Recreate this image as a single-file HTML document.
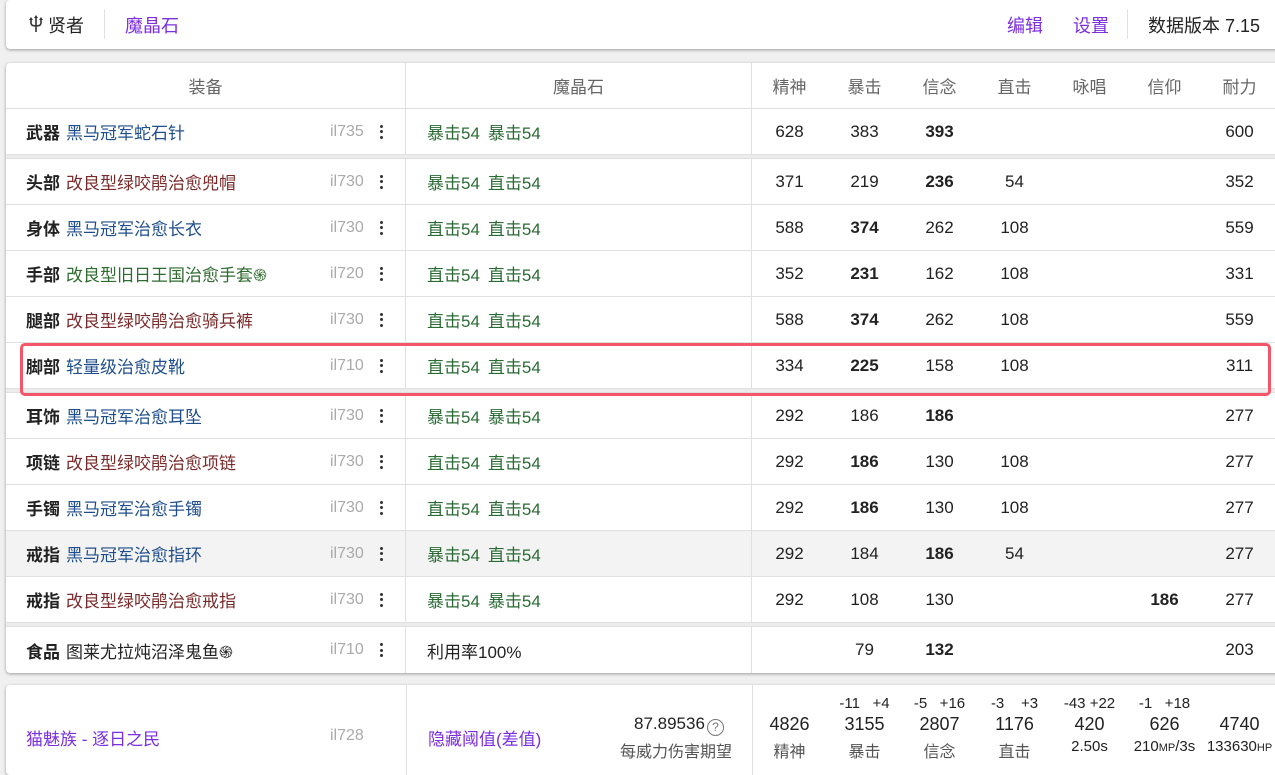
<!DOCTYPE html>
<html><head><meta charset="utf-8"><style>
*{box-sizing:border-box;margin:0;padding:0}
body{width:1275px;height:768px;overflow:hidden;background:#f0f0f0;font-family:"Liberation Sans","Noto Sans CJK SC",sans-serif;font-size:17px;color:#222;position:relative}
.card{position:absolute;left:6px;width:1280px;background:#fff;border-radius:4px;box-shadow:0 1px 3px rgba(0,0,0,.35)}
.hdr{top:0;height:49px}
.row{display:flex;height:46px;align-items:center;border-bottom:1px solid #e0e0e0}
.row>div{height:100%;display:flex;align-items:center;justify-content:center}
.eq{width:400px;border-right:1px solid #e0e0e0;justify-content:flex-start!important;padding-left:20px;position:relative}
.mt{width:346px;border-right:1px solid #e0e0e0;justify-content:flex-start!important;padding-left:21px;color:#2a6b34}
.s{width:75px}
.th{color:#666}
.slot{font-weight:bold;margin-right:6px}
.il{position:absolute;left:324px;top:50%;transform:translateY(-50%);color:#aaa;font-size:16px}
.dots{position:absolute;left:374px;top:50%;width:4px;height:14px;transform:translateY(-50%)}
.dots i{display:block;width:3px;height:3px;background:#333;border-radius:50%;margin-bottom:2.5px}
.b{color:#1f4e8c}.r{color:#7a2a2a}.g{color:#2e6b2e}
.sep{height:4px;background:#ececec;border-bottom:1px solid #e0e0e0}
.bd{font-weight:bold}
.pu{color:#7b2fe0}
.mt span{margin-right:8px}
.f{position:absolute;top:0;display:flex;font-size:15px;color:#222}
.f>div{width:75px;text-align:center;position:relative;height:83px}
.f .t{position:absolute;top:10px;left:0;width:75px;font-size:15px}
.f .m{position:absolute;top:29px;left:0;width:75px;font-size:18px}
.f .u{position:absolute;top:53px;left:0;width:75px;font-size:16px;color:#555}
</style></head><body>
<div class="card hdr">
 <svg style="position:absolute;left:22px;top:15px" width="16" height="18" viewBox="0 0 16 18"><path d="M8 2v15M3 4v4q0 3 5 3q5 0 5-3V4" fill="none" stroke="#333" stroke-width="1.6"/><path d="M8 0l-2 3h4zM3 2l-2 3h4zM13 2l-2 3h4z" fill="#333"/></svg>
 <div style="position:absolute;left:42px;top:12px;font-size:18px">贤者</div>
 <div style="position:absolute;left:98px;top:9px;width:1px;height:30px;background:#e0e0e0"></div>
 <div class="pu" style="position:absolute;left:119px;top:12px;font-size:18px">魔晶石</div>
 <div class="pu" style="position:absolute;left:1001px;top:12px;font-size:18px">编辑</div>
 <div class="pu" style="position:absolute;left:1067px;top:12px;font-size:18px">设置</div>
 <div style="position:absolute;left:1121px;top:9px;width:1px;height:30px;background:#e0e0e0"></div>
 <div style="position:absolute;left:1142px;top:12px;font-size:18px">数据版本 7.15</div>
</div>
<div class="card" style="top:63px;height:610px">
 <div class="row th"><div class="eq" style="justify-content:center!important;padding-left:0">装备</div><div class="mt" style="justify-content:center!important;padding-left:0;color:#666">魔晶石</div><div class="s">精神</div><div class="s">暴击</div><div class="s">信念</div><div class="s">直击</div><div class="s">咏唱</div><div class="s">信仰</div><div class="s">耐力</div></div>
 <div class="row"><div class="eq"><span class="slot">武器</span><span class="b">黑马冠军蛇石针</span><span class="il">il735</span><span class="dots"><i></i><i></i><i></i></span></div><div class="mt"><span>暴击54</span><span>暴击54</span></div><div class="s">628</div><div class="s">383</div><div class="s bd">393</div><div class="s"></div><div class="s"></div><div class="s"></div><div class="s">600</div></div>
 <div class="sep"></div>
 <div class="row"><div class="eq"><span class="slot">头部</span><span class="r">改良型绿咬鹃治愈兜帽</span><span class="il">il730</span><span class="dots"><i></i><i></i><i></i></span></div><div class="mt"><span>暴击54</span><span>直击54</span></div><div class="s">371</div><div class="s">219</div><div class="s bd">236</div><div class="s">54</div><div class="s"></div><div class="s"></div><div class="s">352</div></div>
 <div class="row"><div class="eq"><span class="slot">身体</span><span class="b">黑马冠军治愈长衣</span><span class="il">il730</span><span class="dots"><i></i><i></i><i></i></span></div><div class="mt"><span>直击54</span><span>直击54</span></div><div class="s">588</div><div class="s bd">374</div><div class="s">262</div><div class="s">108</div><div class="s"></div><div class="s"></div><div class="s">559</div></div>
 <div class="row"><div class="eq"><span class="slot">手部</span><span class="g">改良型旧日王国治愈手套֍</span><span class="il">il720</span><span class="dots"><i></i><i></i><i></i></span></div><div class="mt"><span>直击54</span><span>直击54</span></div><div class="s">352</div><div class="s bd">231</div><div class="s">162</div><div class="s">108</div><div class="s"></div><div class="s"></div><div class="s">331</div></div>
 <div class="row"><div class="eq"><span class="slot">腿部</span><span class="r">改良型绿咬鹃治愈骑兵裤</span><span class="il">il730</span><span class="dots"><i></i><i></i><i></i></span></div><div class="mt"><span>直击54</span><span>直击54</span></div><div class="s">588</div><div class="s bd">374</div><div class="s">262</div><div class="s">108</div><div class="s"></div><div class="s"></div><div class="s">559</div></div>
 <div class="row"><div class="eq"><span class="slot">脚部</span><span class="b">轻量级治愈皮靴</span><span class="il">il710</span><span class="dots"><i></i><i></i><i></i></span></div><div class="mt"><span>直击54</span><span>直击54</span></div><div class="s">334</div><div class="s bd">225</div><div class="s">158</div><div class="s">108</div><div class="s"></div><div class="s"></div><div class="s">311</div></div>
 <div class="sep"></div>
 <div class="row"><div class="eq"><span class="slot">耳饰</span><span class="b">黑马冠军治愈耳坠</span><span class="il">il730</span><span class="dots"><i></i><i></i><i></i></span></div><div class="mt"><span>暴击54</span><span>暴击54</span></div><div class="s">292</div><div class="s">186</div><div class="s bd">186</div><div class="s"></div><div class="s"></div><div class="s"></div><div class="s">277</div></div>
 <div class="row"><div class="eq"><span class="slot">项链</span><span class="r">改良型绿咬鹃治愈项链</span><span class="il">il730</span><span class="dots"><i></i><i></i><i></i></span></div><div class="mt"><span>直击54</span><span>直击54</span></div><div class="s">292</div><div class="s bd">186</div><div class="s">130</div><div class="s">108</div><div class="s"></div><div class="s"></div><div class="s">277</div></div>
 <div class="row"><div class="eq"><span class="slot">手镯</span><span class="b">黑马冠军治愈手镯</span><span class="il">il730</span><span class="dots"><i></i><i></i><i></i></span></div><div class="mt"><span>直击54</span><span>直击54</span></div><div class="s">292</div><div class="s bd">186</div><div class="s">130</div><div class="s">108</div><div class="s"></div><div class="s"></div><div class="s">277</div></div>
 <div class="row" style="background:#f3f3f3"><div class="eq"><span class="slot">戒指</span><span class="b">黑马冠军治愈指环</span><span class="il">il730</span><span class="dots"><i></i><i></i><i></i></span></div><div class="mt"><span>暴击54</span><span>直击54</span></div><div class="s">292</div><div class="s">184</div><div class="s bd">186</div><div class="s">54</div><div class="s"></div><div class="s"></div><div class="s">277</div></div>
 <div class="row"><div class="eq"><span class="slot">戒指</span><span class="r">改良型绿咬鹃治愈戒指</span><span class="il">il730</span><span class="dots"><i></i><i></i><i></i></span></div><div class="mt"><span>暴击54</span><span>暴击54</span></div><div class="s">292</div><div class="s">108</div><div class="s">130</div><div class="s"></div><div class="s"></div><div class="s bd">186</div><div class="s">277</div></div>
 <div class="sep"></div>
 <div class="row" style="border-bottom:none"><div class="eq"><span class="slot">食品</span><span>图莱尤拉炖沼泽鬼鱼֍</span><span class="il">il710</span><span class="dots"><i></i><i></i><i></i></span></div><div class="mt" style="color:#222">利用率100%</div><div class="s"></div><div class="s">79</div><div class="s bd">132</div><div class="s"></div><div class="s"></div><div class="s"></div><div class="s">203</div></div>
</div>
<div style="position:absolute;left:20px;top:343px;width:1251px;height:53px;border:3px solid #f25668;border-radius:5px"></div>
<div class="card" style="top:685px;height:90px">
 <div style="position:absolute;left:400px;top:0;width:1px;height:90px;background:#e0e0e0"></div>
 <div style="position:absolute;left:746px;top:0;width:1px;height:90px;background:#e0e0e0"></div>
 <div class="pu" style="position:absolute;left:20px;top:40px">猫魅族 - 逐日之民</div>
 <div style="position:absolute;left:324px;top:42px;color:#aaa;font-size:16px">il728</div>
 <div class="pu" style="position:absolute;left:422px;top:40px">隐藏阈值(差值)</div>
 <div style="position:absolute;left:628px;top:29px;font-size:17px">87.89536<span style="display:inline-block;width:17px;height:17px;border:1px solid #777;border-radius:50%;font-size:12px;text-align:center;line-height:15px;color:#777;margin-left:2px;vertical-align:-2px">?</span></div>
 <div style="position:absolute;left:614px;top:53px;font-size:16px;color:#555">每威力伤害期望</div>
 <div class="f" style="left:746px">
  <div><div class="m">4826</div><div class="u">精神</div></div>
  <div><div class="t">-11 &nbsp; +4</div><div class="m">3155</div><div class="u">暴击</div></div>
  <div><div class="t">-5 &nbsp; +16</div><div class="m">2807</div><div class="u">信念</div></div>
  <div><div class="t">-3 &nbsp;&nbsp; +3</div><div class="m">1176</div><div class="u">直击</div></div>
  <div><div class="t">-43 +22</div><div class="m">420</div><div class="u" style="font-size:15px;color:#222">2.50s</div></div>
  <div><div class="t">-1 &nbsp; +18</div><div class="m">626</div><div class="u" style="font-size:15px;color:#222">210<span style="font-size:11px">MP</span>/3s</div></div>
  <div><div class="m">4740</div><div class="u" style="font-size:15px;color:#222">133630<span style="font-size:11px">HP</span></div></div>
 </div>
</div>
</body></html>
